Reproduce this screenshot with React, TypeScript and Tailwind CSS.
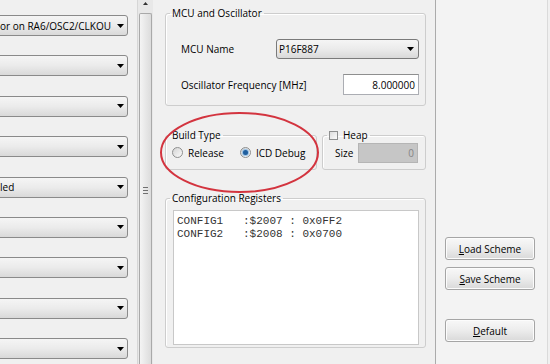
import React from 'react';

const leftCombos = [
    'or on RA6/OSC2/CLKOU',
    '',
    '',
    '',
    'led',
    '',
    '',
    '',
    '',
];

const registers = [
    'CONFIG1   :$2007 : 0x0FF2',
    'CONFIG2   :$2008 : 0x0700',
];

function Arrow() {
    return (
        <svg width="7" height="4" viewBox="0 0 7 4" className="shrink-0">
            <path d="M0 0h7L3.5 4z" fill="#000" />
        </svg>
    );
}

function Radio({ checked }: { checked?: boolean }) {
    return (
        <span className="flex h-[11px] w-[11px] shrink-0 items-center justify-center rounded-full border border-[#8e8f8f] bg-linear-to-br from-[#d4d4d4] to-[#fbfbfb]">
            {checked && (
                <span className="h-[5px] w-[5px] rounded-full bg-[#1f5e9e] shadow-[0_0_1px_1px_#8fbbe3]" />
            )}
        </span>
    );
}

function Button({ hot, rest }: { hot: string; rest: string }) {
    return (
        <div className="flex h-[23px] w-[90px] items-center justify-center rounded-[3px] border border-[#a5a5a5] bg-linear-to-b from-[#f8f8f8] via-[#ececec] to-[#d9d9d9] shadow-[inset_0_0_0_1px_#fcfcfc]">
            <span>
                <span className="underline underline-offset-1">{hot}</span>
                {rest}
            </span>
        </div>
    );
}

export default function App() {
    return (
        <div className="relative flex h-[364px] w-[550px] overflow-hidden bg-[#f0f0f0] font-['Open_Sans',sans-serif] text-[10px] leading-[14px] text-black">
            {/* Left list of combos */}
            <div className="flex w-[138px] shrink-0 flex-col gap-[19.4px] overflow-hidden border-r border-[#d6d6d6] pt-[15px] pr-[9px]">
                {leftCombos.map((t, i) => (
                    <div
                        key={i}
                        className="-ml-[5px] flex h-[21px] items-center justify-between rounded-[3px] border border-[#8a8a8a] bg-linear-to-b from-[#f5f5f5] via-[#ebebeb] to-[#d9d9d9] pl-[4px] pr-[3px]"
                    >
                        <span className="whitespace-nowrap">{t}</span>
                        <Arrow />
                    </div>
                ))}
            </div>

            {/* Scrollbar */}
            <div className="flex w-[15px] shrink-0 flex-col bg-[#e8e8e8] px-[1px]">
                <div className="flex h-[13px] justify-center pt-[2px]">
                    <svg width="5" height="3" viewBox="0 0 5 3">
                        <path d="M0 3h5L2.5 0z" fill="#333" />
                    </svg>
                </div>
                <div className="flex flex-1 flex-col items-center gap-[2px] rounded-t-[2px] border border-b-0 border-[#a9a9a9] bg-linear-to-r from-[#f4f4f4] to-[#dcdcdc] pt-[173px]">
                    <span className="h-[1px] w-[5px] bg-[#707070]" />
                    <span className="h-[1px] w-[5px] bg-[#707070]" />
                    <span className="h-[1px] w-[5px] bg-[#707070]" />
                </div>
            </div>

            {/* Middle settings */}
            <div className="flex w-[282px] shrink-0 flex-col pl-[12px] pr-[9px] pt-[6px]">
                <fieldset className="rounded-[3px] border border-[#cdcdcd] pb-[10px] pl-[15px] pr-[6px] shadow-[inset_1px_1px_0_#fff]">
                    <legend className="-ml-[11px] px-[2px]">MCU and Oscillator</legend>
                    <div className="mt-[19px] flex h-[20px] items-center justify-between">
                        <span>MCU Name</span>
                        <div className="flex h-[20px] w-[143px] items-center justify-between rounded-[3px] border border-[#7a7a7a] bg-linear-to-b from-[#f5f5f5] via-[#ebebeb] to-[#d9d9d9] pl-[2px] pr-[4px]">
                            <span>P16F887</span>
                            <Arrow />
                        </div>
                    </div>
                    <div className="mt-[15px] flex h-[21px] items-center justify-between">
                        <span>Oscillator Frequency [MHz]</span>
                        <div className="flex h-[21px] w-[76px] items-center justify-end border border-[#abadb3] border-t-[#8e8f8f] bg-white pr-[3px]">
                            8.000000
                        </div>
                    </div>
                </fieldset>

                <div className="mt-[22px] flex gap-[5px]">
                    <fieldset className="w-[152px] rounded-[3px] border border-[#cdcdcd] pb-[10px] pl-[6px] shadow-[inset_1px_1px_0_#fff]">
                        <legend className="-ml-[2px] px-[2px]">Build Type</legend>
                        <div className="mt-[4px] flex h-[13px] items-center">
                            <div className="flex items-center gap-[5px]">
                                <Radio />
                                <span>Release</span>
                            </div>
                            <div className="ml-[16px] flex items-center gap-[5px]">
                                <Radio checked />
                                <span>ICD Debug</span>
                            </div>
                        </div>
                    </fieldset>

                    <fieldset className="flex-1 rounded-[3px] border border-[#cdcdcd] pb-[6px] pl-[12px] pr-[7px] shadow-[inset_1px_1px_0_#fff]">
                        <legend className="-ml-[8px] flex items-center gap-[5px] px-[2px]">
                            <span className="h-[9px] w-[9px] border border-[#8e8f8f] bg-linear-to-br from-[#dcdcdc] to-[#fbfbfb]" />
                            <span>Heap</span>
                        </legend>
                        <div className="mt-[1px] flex h-[20px] items-center justify-between">
                            <span>Size</span>
                            <div className="flex h-[20px] w-[60px] items-center justify-end border border-[#b5b5b5] bg-[#c6c6c6] pr-[3px] text-[#858585]">
                                0
                            </div>
                        </div>
                    </fieldset>
                </div>

                <fieldset className="mt-[21px] rounded-[3px] border border-[#cdcdcd] pb-[2px] pl-[7px] pr-[6px] shadow-[inset_1px_1px_0_#fff]">
                    <legend className="-ml-[3px] px-[2px]">Configuration Registers</legend>
                    <div className="mt-[5px] h-[135px] border border-[#c8c8c8] bg-white pl-[3px] pt-[4px] font-['Liberation_Mono',monospace] text-[11px] leading-[13px] whitespace-pre text-[#333]">
                        {registers.map((r) => (
                            <div key={r}>{r}</div>
                        ))}
                    </div>
                </fieldset>
            </div>

            {/* Right buttons */}
            <div className="flex w-[113px] shrink-0 flex-col border-x border-l-[#ababab] border-r-[#dadada] bg-[#f3f3f3] pl-[9px] pt-[237px]">
                <Button hot="L" rest="oad Scheme" />
                <div className="mt-[7px]">
                    <Button hot="S" rest="ave Scheme" />
                </div>
                <div className="mt-[29px]">
                    <Button hot="D" rest="efault" />
                </div>
            </div>

            {/* Red annotation ellipse */}
            <svg className="pointer-events-none absolute left-0 top-0" width="550" height="364">
                <ellipse cx="239.5" cy="152.5" rx="78.5" ry="39.5" fill="none" stroke="#d3343f" strokeWidth="2" />
            </svg>
        </div>
    );
}
